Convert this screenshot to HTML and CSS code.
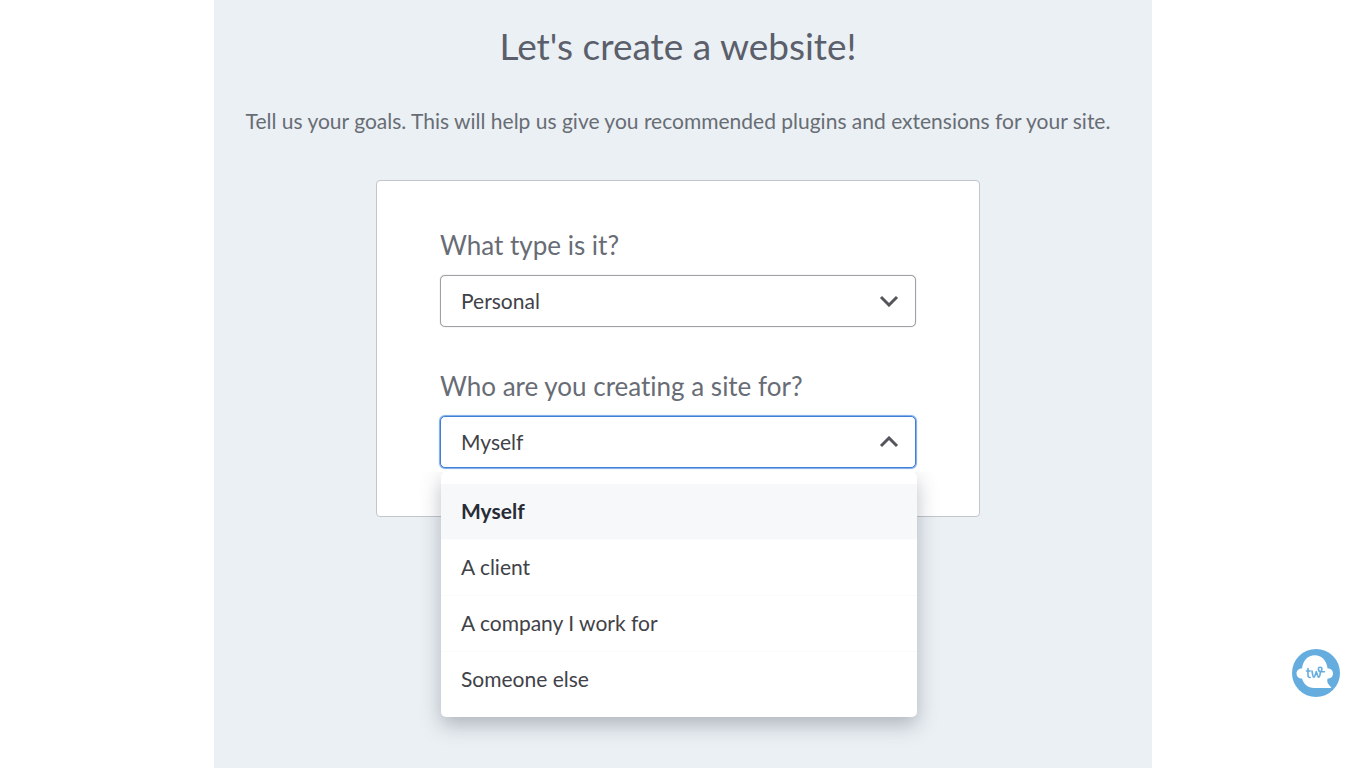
FILE: index.html
```html
<!DOCTYPE html>
<html lang="en">
<head>
<meta charset="utf-8">
<meta name="viewport" content="width=device-width, initial-scale=1">
<title>Let's create a website!</title>
<link rel="stylesheet" href="styles.css">
</head>
<body>
<main class="panel">
  <h1 class="title">Let's create a website!</h1>
  <p class="intro">Tell us your goals. This will help us give you recommended plugins and extensions for your site.</p>
  <form class="card">
    <div class="field">
      <label class="label" for="type">What type is it?</label>
      <div class="control">
        <select class="select" id="type">
          <option>Personal</option>
        </select>
        <svg class="chevron" viewBox="0 0 20 12" aria-hidden="true"><path d="M2 2l8 8 8-8"/></svg>
      </div>
    </div>
    <div class="field">
      <label class="label" for="audience">Who are you creating a site for?</label>
      <div class="control">
        <select class="select select-open" id="audience">
          <option>Myself</option>
          <option>A client</option>
          <option>A company I work for</option>
          <option>Someone else</option>
        </select>
        <svg class="chevron" viewBox="0 0 20 12" aria-hidden="true"><path d="M2 10l8-8 8 8"/></svg>
        <ul class="menu" role="listbox" aria-label="Who are you creating a site for?">
          <li class="option option-selected" role="option" aria-selected="true">Myself</li>
          <li class="option" role="option" aria-selected="false">A client</li>
          <li class="option" role="option" aria-selected="false">A company I work for</li>
          <li class="option" role="option" aria-selected="false">Someone else</li>
        </ul>
      </div>
    </div>
  </form>
</main>
<button class="chat" type="button" aria-label="Open chat">
  <svg class="chat-icon" viewBox="0 0 48 48" aria-hidden="true">
    <circle cx="24" cy="24" r="24" fill="#65addf"/>
    <path d="M10 19.500C11 11.500 16 6.300 22.800 6.300S34.500 11.500 35.600 19.500C39 19.500 41 21.500 41 24.500S39 29.500 35.600 29.500C35 31.500 35.200 33 36 34.500L39.500 39H22C16 39 11.500 35 10 29.500C6.800 29.500 4.500 27.500 4.500 24.500S6.800 19.500 10 19.500Z" fill="#fff"/>
    <g fill="none" stroke="#65addf" stroke-width="1.600" stroke-linecap="round" stroke-linejoin="round">
      <path d="M16 19.500v7q0 2 2.200 2M14.500 22h3.700M20 22l.8 4.500q1 3.500 2.200 0l1.300-4 1.300 4q1.200 3.300 2.200 0l.8-4"/>
      <path d="M32.500 22.800h-3.500c-3 0-3.600-4.600-.9-4.600 2.500 0 2.300 2.800.5 4.800"/>
    </g>
  </svg>
</button>
</body>
</html>
```

FILE: styles.css
```css
* {
  box-sizing: border-box;
}

body {
  margin: 0;
  background: #fff;
  color: #3f4248;
  font-family: Lato, "Liberation Sans", sans-serif;
  font-size: 21px;
  font-variant-ligatures: none;
}

.panel {
  display: flex;
  flex-direction: column;
  align-items: center;
  width: 100%;
  max-width: 938px;
  min-height: 100vh;
  margin: 0 auto;
  padding: 22px 26px 40px 16px;
  background: #ebf0f4;
}

.title {
  margin: 0 0 37px;
  color: #5a5f6b;
  font-size: 37px;
  font-weight: 400;
  line-height: 48px;
  text-align: center;
}

.intro {
  margin: 0 0 45px;
  color: #686d75;
  font-size: 21px;
  line-height: 28px;
  text-align: center;
}

.card {
  display: flex;
  flex-direction: column;
  gap: 39px;
  width: 100%;
  max-width: 604px;
  padding: 44px 63px 48px;
  background: #fff;
  border: 1px solid #c2c5ca;
  border-radius: 4px;
}

.field {
  display: flex;
  flex-direction: column;
  gap: 10px;
}

.label {
  color: #686c75;
  font-size: 26px;
  line-height: 40px;
}

.control {
  position: relative;
}

.select {
  display: block;
  width: 100%;
  height: 52px;
  padding: 0 48px 2px 20px;
  appearance: none;
  background: #fff;
  border: 1px solid #9fa1a6;
  border-radius: 5px;
  box-shadow: 0 0 1px #9fa1a6;
  color: inherit;
  font: inherit;
}

.select-open {
  border-color: #3f7fd6;
  box-shadow: 0 0 1px 1px #7ba9e6;
}

.chevron {
  position: absolute;
  top: 20px;
  right: 17px;
  width: 20px;
  height: 12px;
  fill: none;
  stroke: #55565b;
  stroke-width: 3;
  pointer-events: none;
}

.menu {
  position: absolute;
  top: 56px;
  left: 1px;
  width: 100%;
  margin: 0;
  padding: 12px 0 9px;
  background: #fff;
  border-radius: 5px;
  box-shadow: 0 8px 20px rgba(60, 66, 82, 0.34);
  clip-path: inset(0 -40px -40px -40px);
  list-style: none;
}

.option {
  padding: 0 20px 2px;
  border-bottom: 1px solid #fbfbfb;
  line-height: 53px;
}

.option-selected {
  background: #f7f8fa;
  color: #282c36;
  font-weight: 700;
}

.option:last-child {
  border-bottom-color: transparent;
}

.chat {
  position: fixed;
  right: 26px;
  bottom: 71px;
  width: 48px;
  height: 48px;
  padding: 0;
  background: none;
  border: 0;
  border-radius: 50%;
  cursor: pointer;
}

.chat-icon {
  display: block;
  width: 100%;
  height: 100%;
}
```
